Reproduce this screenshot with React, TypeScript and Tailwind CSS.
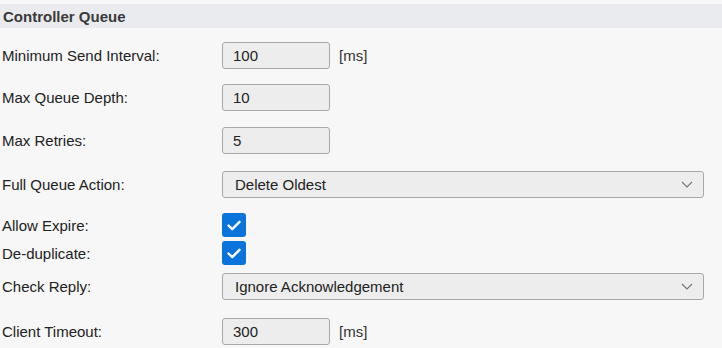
import React from 'react';

function TextBox({ value, unit }: { value: string; unit?: string }) {
  return (
    <div className="flex items-center">
      <div className="w-[108px] h-[27px] flex items-center pl-[10px] rounded-[3px] border border-[#a9a9a9] bg-[#ededed] text-[#222]">
        {value}
      </div>
      {unit && <span className="ml-[9px] text-[#333]">{unit}</span>}
    </div>
  );
}

function SelectBox({ value }: { value: string }) {
  return (
    <div className="w-[482px] h-[27px] flex items-center justify-between pl-[12px] pr-[10px] rounded-[3px] border border-[#a9a9a9] bg-[#ededed] text-[#222]">
      <span>{value}</span>
      <svg width="12" height="7" viewBox="0 0 12 7" fill="none">
        <path d="M1 1l5 5 5-5" stroke="#777" strokeWidth="1.2" />
      </svg>
    </div>
  );
}

function CheckBox() {
  return (
    <div className="w-[24px] h-[24px] rounded-[3px] bg-[#0b74da] flex items-center justify-center">
      <svg width="14" height="11" viewBox="0 0 14 11" fill="none">
        <path d="M1.5 5.5l3.8 3.6L12.5 1.8" stroke="#fff" strokeWidth="2.4" strokeLinecap="round" strokeLinejoin="round" />
      </svg>
    </div>
  );
}

function Row({ label, children, className }: { label: string; children: React.ReactNode; className?: string }) {
  return (
    <div className={`flex items-center ${className ?? ''}`}>
      <div className="w-[222px] pl-[2px] text-[#222]">{label}</div>
      {children}
    </div>
  );
}

export default function App() {
  return (
    <div className="w-[722px] h-[348px] bg-[#f7f7f7] overflow-hidden text-[15px] leading-none" style={{ fontFamily: '"Liberation Sans", Arial, sans-serif' }}>
      <div className="mt-[4px] h-[24px] bg-[#e9ebee] flex items-center pl-[3px] font-bold text-[#3a3a3a]">
        Controller Queue
      </div>
      <Row label="Minimum Send Interval:" className="mt-[14px]">
        <TextBox value="100" unit="[ms]" />
      </Row>
      <Row label="Max Queue Depth:" className="mt-[15px]">
        <TextBox value="10" />
      </Row>
      <Row label="Max Retries:" className="mt-[16px]">
        <TextBox value="5" />
      </Row>
      <Row label="Full Queue Action:" className="mt-[17px]">
        <SelectBox value="Delete Oldest" />
      </Row>
      <Row label="Allow Expire:" className="mt-[15px]">
        <CheckBox />
      </Row>
      <Row label="De-duplicate:" className="mt-[4px]">
        <CheckBox />
      </Row>
      <Row label="Check Reply:" className="mt-[8px]">
        <SelectBox value="Ignore Acknowledgement" />
      </Row>
      <Row label="Client Timeout:" className="mt-[18px]">
        <TextBox value="300" unit="[ms]" />
      </Row>
    </div>
  );
}
